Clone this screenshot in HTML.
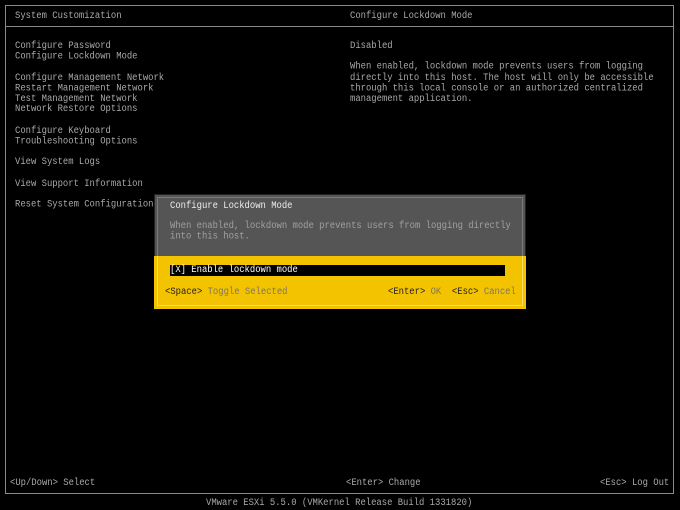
<!DOCTYPE html>
<html><head><style>
html,body{margin:0;padding:0;background:#000;width:680px;height:510px;overflow:hidden}
body{position:relative;font-family:"Liberation Mono",monospace;font-size:8.9px;color:#a9a9a9;line-height:10.6px}
.t{position:absolute;white-space:pre;transform:scaleY(1.15);transform-origin:0 0}
.box{position:absolute;left:5px;top:5px;width:669px;height:489px;border:1px solid #8a8a8a;box-sizing:border-box}
.hl{position:absolute;left:5px;top:26px;width:669px;height:1px;background:#8a8a8a}
.dlg{position:absolute;left:154px;top:194px;width:372px;height:115px;background:#555;border:1px solid #222;box-sizing:border-box}
.yel{position:absolute;left:154px;top:256px;width:372px;height:53px;background:#f3c300}
.ib1{position:absolute;left:157px;top:197px;width:366px;height:59px;border:1px solid #7a7a7a;border-bottom:none;box-sizing:border-box}
.ib2{position:absolute;left:157px;top:256px;width:366px;height:50px;border:1px solid #f8dc60;border-top:none;box-sizing:border-box}
.sel{position:absolute;left:170px;top:265px;width:335px;height:11px;background:#000}
</style></head><body>
<div class="box"></div><div class="hl"></div>
<div class="t" style="left:15px;top:10px">System Customization</div>
<div class="t" style="left:350px;top:10px">Configure Lockdown Mode</div>
<div class="t" style="left:15px;top:41px;line-height:9.22px">Configure Password
Configure Lockdown Mode

Configure Management Network
Restart Management Network
Test Management Network
Network Restore Options

Configure Keyboard
Troubleshooting Options

View System Logs

View Support Information

Reset System Configuration</div>
<div class="t" style="left:350px;top:41px;line-height:9.22px">Disabled

When enabled, lockdown mode prevents users from logging
directly into this host. The host will only be accessible
through this local console or an authorized centralized
management application.</div>
<div class="dlg"></div><div class="yel"></div><div class="ib1"></div><div class="ib2"></div>
<div class="t" style="left:170px;top:200px;color:#ececec">Configure Lockdown Mode</div>
<div class="t" style="left:170px;top:221px;color:#a0a0a0;line-height:9.22px">When enabled, lockdown mode prevents users from logging directly
into this host.</div>
<div class="sel"></div>
<div class="t" style="left:170px;top:264px;color:#fff">[X] Enable lockdown mode</div>
<div class="t" style="left:165px;top:286px;color:#222"><span>&lt;Space&gt;</span> <span style="color:#7d7660">Toggle Selected</span></div>
<div class="t" style="left:388px;top:286px;color:#222">&lt;Enter&gt; <span style="color:#7d7660">OK</span>  &lt;Esc&gt; <span style="color:#7d7660">Cancel</span></div>
<div class="t" style="left:10px;top:477px">&lt;Up/Down&gt; Select</div>
<div class="t" style="left:346px;top:477px">&lt;Enter&gt; Change</div>
<div class="t" style="left:600px;top:477px">&lt;Esc&gt; Log Out</div>
<div class="t" style="left:206px;top:497px">VMware ESXi 5.5.0 (VMKernel Release Build 1331820)</div>
</body></html>
